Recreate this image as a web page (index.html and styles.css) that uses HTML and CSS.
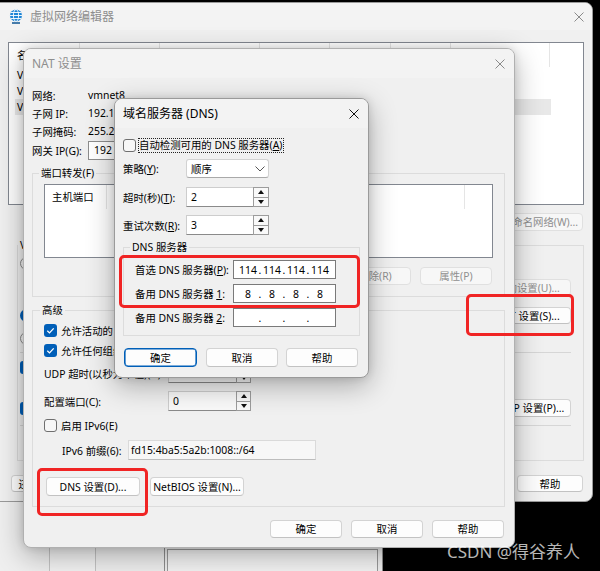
FILE: index.html
```html
<!DOCTYPE html>
<html lang="zh-CN">
<head>
<meta charset="utf-8">
<title>虚拟网络编辑器</title>
<link rel="stylesheet" href="styles.css">
</head>
<body>
<div class="desktop">

  <div class="win bgwin">
    <div class="bg-cell c1"></div>
    <div class="bg-cell c2"></div>
    <div class="bg-cell c3"></div>
    <div class="bg-panel"></div>
  </div>

  <!-- 虚拟网络编辑器 -->
  <div class="win mainwin">
    <div class="titlebar">
      <svg class="appicon" width="14" height="15" viewBox="0 0 14 15">
        <circle cx="7" cy="6.5" r="6" fill="#1f86d6"/>
        <ellipse cx="7" cy="6.5" rx="2.6" ry="6" fill="none" stroke="#fff" stroke-width="0.9"/>
        <path d="M1 6.5H13M2 3.5H12M2 9.5H12" stroke="#fff" stroke-width="0.9"/>
        <rect x="3" y="13.2" width="8" height="1.6" fill="#1d5f98"/>
      </svg>
      <span class="title dim">虚拟网络编辑器</span>
      <span class="close"><svg width="10" height="10" viewBox="0 0 10 10"><path d="M0.5 0.5L9.5 9.5M9.5 0.5L0.5 9.5" stroke="#8a8a8a" stroke-width="1"/></svg></span>
    </div>
    <div class="main-body">
      <div class="listview">
        <div class="lv-head">
          <span class="lv-col m1">名称</span>
          <span class="lv-col m2">类型</span>
          <span class="lv-col m3">外部连接</span>
          <span class="lv-col m4">主机连接</span>
          <span class="lv-col m5">DHCP</span>
          <span class="lv-col m6">子网地址</span>
          <span class="lv-col m7"></span>
        </div>
        <div class="lv-row">
          <span class="lv-cell r1">VMnet0</span><span class="lv-cell m2">桥接模式</span><span class="lv-cell m3">自动桥接</span><span class="lv-cell m4">-</span><span class="lv-cell m5">-</span><span class="lv-cell m6">-</span><span class="lv-cell m7"></span>
        </div>
        <div class="lv-row">
          <span class="lv-cell r1">VMnet1</span><span class="lv-cell m2">仅主机模式</span><span class="lv-cell m3">-</span><span class="lv-cell m4">已连接</span><span class="lv-cell m5">已启用</span><span class="lv-cell m6">192.168.47.0</span><span class="lv-cell m7"></span>
        </div>
        <div class="lv-row selected">
          <span class="lv-cell r1">VMnet8</span><span class="lv-cell m2">NAT 模式</span><span class="lv-cell m3">NAT 模式</span><span class="lv-cell m4">已连接</span><span class="lv-cell m5">已启用</span><span class="lv-cell m6">192.168.80.0</span><span class="lv-cell m7"></span>
        </div>
      </div>

      <div class="btn-row top-btns">
        <div class="btn w86">添加网络(E)...</div>
        <div class="btn w72">移除网络(O)</div>
        <div class="btn w86 disabled">重命名网络(W)...</div>
      </div>

      <fieldset class="group vmnet">
        <legend>VMnet 信息</legend>
        <div class="gbody vmnet-body">
          <div class="vrow h16"><span class="radio"></span><span class="lbl">桥接模式(将虚拟机直接连接到外部网络)(B)</span></div>
          <div class="vrow h17 mt8 indent">
            <span class="lbl">已桥接至(G):</span>
            <div class="combo wide disabled-combo"><span>自动</span></div>
            <div class="btn w86 disabled push">自动设置(U)...</div>
          </div>
          <div class="vrow h17 mt11"><span class="radio on"></span><span class="lbl">NAT 模式(与虚拟机共享主机的 IP 地址)(N)</span><div class="btn w86 push">NAT 设置(S)...</div></div>
          <div class="vrow h16 mt6"><span class="radio"></span><span class="lbl">仅主机模式(在专用网络内连接虚拟机)(H)</span></div>
          <div class="sep mt6"></div>
          <div class="vrow h16 mt6"><span class="check on"><svg width="13" height="13" viewBox="0 0 13 13"><polyline points="3.3,6.7 5.5,8.9 9.7,4.4" fill="none" stroke="#fff" stroke-width="1.3"/></svg></span><span class="lbl">将主机虚拟适配器连接到此网络(V)</span></div>
          <div class="vrow h16 mt2 indent"><span class="lbl">主机虚拟适配器名称: VMware 网络适配器 VMnet8</span></div>
          <div class="vrow h18 mt6"><span class="check on"><svg width="13" height="13" viewBox="0 0 13 13"><polyline points="3.3,6.7 5.5,8.9 9.7,4.4" fill="none" stroke="#fff" stroke-width="1.3"/></svg></span><span class="lbl">使用本地 DHCP 服务将 IP 地址分配给虚拟机(D)</span><div class="btn w86 push">DHCP 设置(P)...</div></div>
          <div class="sep mt8"></div>
          <div class="vrow h17 mt9 indent"><span class="lbl">子网 IP (I):</span><span class="lbl gap-l">子网掩码(M):</span></div>
        </div>
      </fieldset>

      <div class="btn-row bottom-btns">
        <div class="btn w90 restore">还原默认设置(R)</div>
        <div class="btn-group">
          <div class="btn w66">导入(T)...</div>
          <div class="btn w66">导出(X)...</div>
          <div class="btn w66">确定</div>
          <div class="btn w66">取消</div>
          <div class="btn w66">应用(A)</div>
          <div class="btn w66">帮助</div>
        </div>
      </div>
    </div>
  </div>

  <!-- NAT 设置 -->
  <div class="win dialog nat">
    <div class="titlebar">
      <span class="title dim">NAT 设置</span>
      <span class="close"><svg width="10" height="10" viewBox="0 0 10 10"><path d="M0.5 0.5L9.5 9.5M9.5 0.5L0.5 9.5" stroke="#8a8a8a" stroke-width="1"/></svg></span>
    </div>
    <div class="nat-body">
      <div class="info">
        <span>网络:</span><span>vmnet8</span>
        <span>子网 IP:</span><span>192.168.80.0</span>
        <span>子网掩码:</span><span>255.255.255.0</span>
        <span>网关 IP(G):</span>
        <div class="ip gw"><span class="f">192</span><span class="d">.</span><span class="f">168</span><span class="d">.</span><span class="f">80</span><span class="d">.</span><span class="f">2</span></div>
      </div>

      <fieldset class="group port">
        <legend>端口转发(F)</legend>
        <div class="gbody port-body">
          <div class="listbox">
            <div class="lb-head">
              <span class="lb-col p1">主机端口</span>
              <span class="lb-col p2">类型</span>
              <span class="lb-col p3">虚拟机 IP 地址</span>
              <span class="lb-col p4">描述</span>
            </div>
          </div>
          <div class="btn-row port-btns">
            <div class="btn w72">添加(A)...</div>
            <div class="btn w72 disabled">移除(R)</div>
            <div class="btn w72 disabled">属性(P)</div>
          </div>
        </div>
      </fieldset>

      <fieldset class="group adv">
        <legend>高级</legend>
        <div class="gbody adv-body">
          <div class="arow h20"><span class="check on"><svg width="13" height="13" viewBox="0 0 13 13"><polyline points="3.3,6.7 5.5,8.9 9.7,4.4" fill="none" stroke="#fff" stroke-width="1.3"/></svg></span><span class="lbl cbl">允许活动的 FTP(T)</span></div>
          <div class="arow h20"><span class="check on"><svg width="13" height="13" viewBox="0 0 13 13"><polyline points="3.3,6.7 5.5,8.9 9.7,4.4" fill="none" stroke="#fff" stroke-width="1.3"/></svg></span><span class="lbl cbl">允许任何组织唯一标识符(O)</span></div>
          <div class="arow h20 mt3">
            <span class="lbl lw124">UDP 超时(以秒为单位)(U):</span>
            <div class="spin nspin"><div class="field">30</div><div class="arrows"><span class="arr"><i class="up"></i></span><span class="arr"><i class="down"></i></span></div></div>
          </div>
          <div class="arow h20 mt8">
            <span class="lbl lw124">配置端口(C):</span>
            <div class="spin nspin"><div class="field">0</div><div class="arrows"><span class="arr"><i class="up"></i></span><span class="arr"><i class="down"></i></span></div></div>
          </div>
          <div class="arow h20 mt4"><span class="check"></span><span class="lbl cbl">启用 IPv6(E)</span></div>
          <div class="arow h20 mt5 indent">
            <span class="lbl lw66">IPv6 前缀(6):</span>
            <div class="prefix">fd15:4ba5:5a2b:1008::/64</div>
          </div>
          <div class="btn-row setting-btns">
            <div class="btn w94">DNS 设置(D)...</div>
            <div class="btn w94">NetBIOS 设置(N)...</div>
          </div>
        </div>
      </fieldset>

      <div class="btn-row dlg-btns">
        <div class="btn w72">确定</div>
        <div class="btn w72">取消</div>
        <div class="btn w72">帮助</div>
      </div>
    </div>
  </div>

  <!-- 域名服务器 (DNS) -->
  <div class="win dialog dns">
    <div class="titlebar">
      <span class="title">域名服务器 (DNS)</span>
      <span class="close"><svg width="10" height="10" viewBox="0 0 10 10"><path d="M0.5 0.5L9.5 9.5M9.5 0.5L0.5 9.5" stroke="#111" stroke-width="1"/></svg></span>
    </div>
    <div class="dns-body">
      <div class="drow h16 mt9"><span class="check"></span><span class="focus">自动检测可用的 DNS 服务器(<u>A</u>)</span></div>
      <div class="drow h19 mt6">
        <span class="lbl lw63">策略(<u>Y</u>):</span>
        <div class="combo"><span>顺序</span><svg width="10" height="6" viewBox="0 0 10 6"><polyline points="0.5,0.5 5,5 9.5,0.5" fill="none" stroke="#555" stroke-width="1"/></svg></div>
      </div>
      <div class="drow h20 mt9">
        <span class="lbl lw63">超时(秒)(<u>T</u>):</span>
        <div class="spin dspin"><div class="field">2</div><div class="arrows"><span class="arr"><i class="up"></i></span><span class="arr"><i class="down"></i></span></div></div>
      </div>
      <div class="drow h20 mt8">
        <span class="lbl lw63">重试次数(<u>R</u>):</span>
        <div class="spin dspin"><div class="field">3</div><div class="arrows"><span class="arr"><i class="up"></i></span><span class="arr"><i class="down"></i></span></div></div>
      </div>
      <fieldset class="group dnsgroup">
        <legend>DNS 服务器</legend>
        <div class="gbody dns-grid">
          <span class="srv">首选 DNS 服务器(<u>P</u>):</span>
          <div class="ip"><span class="f">114</span><span class="d">.</span><span class="f">114</span><span class="d">.</span><span class="f">114</span><span class="d">.</span><span class="f">114</span></div>
          <span class="srv">备用 DNS 服务器 <u>1</u>:</span>
          <div class="ip"><span class="f">8</span><span class="d">.</span><span class="f">8</span><span class="d">.</span><span class="f">8</span><span class="d">.</span><span class="f">8</span></div>
          <span class="srv">备用 DNS 服务器 <u>2</u>:</span>
          <div class="ip"><span class="f"></span><span class="d">.</span><span class="f"></span><span class="d">.</span><span class="f"></span><span class="d">.</span><span class="f"></span></div>
        </div>
      </fieldset>
      <div class="btn-row dns-btns">
        <div class="btn default w73">确定</div>
        <div class="btn w72">取消</div>
        <div class="btn w72">帮助</div>
      </div>
    </div>
  </div>

  <!-- annotations -->
  <div class="mark mark-dns"></div>
  <div class="mark mark-nat"></div>
  <div class="mark mark-btn"></div>

  <div class="watermark">CSDN @得谷养人</div>
</div>
</body>
</html>
```

FILE: styles.css
```css
* { box-sizing: border-box; }
html, body { margin: 0; padding: 0; }
body {
  background: #000;
  font-family: "Noto Sans", "Noto Sans CJK SC", sans-serif;
  font-size: 10.4px;
  color: #000;
}
u { text-decoration: underline; text-underline-offset: 1px; }

.desktop { position: relative; width: 600px; height: 571px; overflow: hidden; background: #000; }

.win { position: absolute; background: #f0f0f0; }

/* background window at the bottom */
.bgwin {
  left: 0; top: 502px; width: 383px; height: 69px;
  display: flex; background: #efefef; border-right: 1px solid #8c8c8c;
}
.bg-cell { height: 100%; border-right: 1px solid #c4c4c4; }
.bg-cell.c1 { width: 50px; }
.bg-cell.c2 { width: 46px; background: #f3f3f3; }
.bg-cell.c3 { width: 69px; border-right: 1px solid #8e8e8e; }
.bg-panel { flex: 1; margin: 47px 4px 0 2px; border-top: 1px solid #9a9a9a; border-left: 1px solid #9a9a9a; border-right: 1px solid #9a9a9a; background: #f4f4f4; }

/* title bars */
.titlebar { display: flex; align-items: center; flex: none; background: #f3f3f3; }
.title { font-size: 12px; line-height: 16px; }
.title.dim { color: #8e8e8e; }
.close { margin-left: auto; width: 10px; height: 10px; display: flex; }
.close svg { display: block; }

/* main window */
.mainwin {
  left: -1px; top: 2px; width: 594px; height: 500px;
  border: 1px solid #9a9a9a; border-radius: 0 8px 8px 0;
  display: flex; flex-direction: column; overflow: hidden;
}
.mainwin .titlebar { height: 27px; padding-left: 9px; }
.mainwin .title { margin-left: 7px; }
.mainwin .close { margin-right: 8px; }
.appicon { display: block; }

.main-body { display: flex; flex-direction: column; padding: 0 8px; }

.listview {
  margin-top: 12px; height: 163px; background: #fff;
  border: 1px solid #828790; overflow: hidden;
}
.lv-head { display: flex; height: 24px; }
.lv-col { height: 24px; line-height: 24px; padding-left: 8px; border-right: 1px solid #e5e5e5; white-space: nowrap; overflow: hidden; }
.m1 { width: 71px; }
.m2 { width: 80px; }
.m3 { width: 100px; }
.m4 { width: 70px; }
.m5 { width: 61px; }
.m6 { width: 60px; }
.m7 { width: 99px; }
.lv-row { display: flex; height: 16px; line-height: 16px; margin-left: 6px; width: 536px; }
.lv-row.selected { background: #e8e8e8; }
.lv-cell { padding-left: 8px; white-space: nowrap; overflow: hidden; flex: none; }
.lv-cell.r1 { width: 65px; padding-left: 2px; }

.btn-row { display: flex; align-items: stretch; }
.top-btns { margin-top: 8px; height: 18px; justify-content: flex-end; gap: 9px; padding-right: 1px; }

.btn {
  display: flex; align-items: center; justify-content: center;
  background: #fdfdfd; border: 1px solid #d3d3d3; border-bottom-color: #c2c2c2;
  border-radius: 4px; white-space: nowrap; color: #000; line-height: 14px;
}
.btn.disabled { color: #8f8f8f; background: #f7f7f7; border-color: #e0e0e0; }
.btn.default { border-color: #005fb8; box-shadow: inset 0 0 0 0.6px #005fb8; }
.w66 { width: 66px; }
.w72 { width: 72px; }
.w73 { width: 73px; }
.w86 { width: 86px; }
.w90 { width: 90px; }
.w94 { width: 94px; }

/* group boxes */
fieldset.group { margin: 0; padding: 0; border: 1px solid #dcdcdc; min-width: 0; }
fieldset.group legend { padding: 0 2px; line-height: 14px; height: 14px; }
.gbody { display: flex; flex-direction: column; }

fieldset.vmnet { margin: 7px 0 0 9px; }
fieldset.vmnet legend { margin-left: 0; }
.vmnet-body { padding: 3px 12px 8px 2px; }
.vrow { display: flex; align-items: center; white-space: nowrap; }
.vrow .lbl { margin-left: 4px; }
.vrow .gap-l { margin-left: 120px; }
.vrow.indent { padding-left: 14px; }
.push { margin-left: auto; height: 100%; }
.h16 { height: 16px; }
.h17 { height: 17px; }
.h18 { height: 18px; }
.h19 { height: 19px; }
.h20 { height: 20px; }
.mt2 { margin-top: 2px; }
.mt3 { margin-top: 3px; }
.mt4 { margin-top: 4px; }
.mt5 { margin-top: 5px; }
.mt6 { margin-top: 6px; }
.mt8 { margin-top: 8px; }
.mt9 { margin-top: 9px; }
.mt11 { margin-top: 11px; }
.sep { height: 1px; background: #d6d6d6; }

.radio { flex: none; width: 13px; height: 13px; border-radius: 50%; border: 1px solid #8a8a8a; background: #f5f5f5; }
.radio.on { border: 4px solid #005fb8; background: #fff; }
.check { flex: none; width: 13px; height: 13px; border-radius: 3px; border: 1px solid #6f6f6f; background: #f7f7f7; display: block; }
.check.on { border: none; background: #005fb8; }
.check svg { display: block; }

.combo {
  display: flex; align-items: center; justify-content: space-between;
  width: 83px; height: 19px; background: #fff;
  border: 1px solid #d2d2d2; border-bottom-color: #a9a9a9; border-radius: 3px;
  padding: 0 3px 0 4px;
}
.combo svg { display: block; }
.combo.wide { width: 300px; height: 100%; margin-left: 10px; }
.disabled-combo { color: #8f8f8f; background: #f7f7f7; }

.bottom-btns { margin-top: 14px; height: 17px; }
.restore { margin-left: 3px; }
.btn-group { display: flex; margin-left: auto; gap: 8px; padding-right: 1px; }

/* dialogs */
.dialog {
  border: 1px solid #b0b0b0; border-radius: 8px;
  box-shadow: 0 8px 28px rgba(0, 0, 0, 0.30), 0 0 8px rgba(0, 0, 0, 0.12);
  display: flex; flex-direction: column; overflow: hidden;
}
.dialog .titlebar { height: 29px; padding-left: 8px; }
.dialog .close { margin-right: 9px; }

/* NAT dialog */
.nat { left: 23px; top: 48px; width: 492px; height: 500px; }
.nat-body { display: flex; flex-direction: column; padding: 0 9px 0 8px; }
.info {
  margin-top: 8px; display: grid; grid-template-columns: 56px 1fr;
  grid-template-rows: 18px 18px 18px 20px; align-items: center; white-space: nowrap;
}
.ip {
  display: flex; align-items: center; width: 103px; height: 19px;
  background: #fff; border: 1px solid #7a7a7a; padding-left: 4px;
}
.ip .f { width: 20px; text-align: center; }
.ip .d { width: 4px; text-align: center; }
.ip.gw { width: 110px; border-color: #8d8d8d; }

fieldset.port { margin-top: 6px; }
fieldset.port legend { margin-left: 6px; }
.port-body { padding: 4px 11px 11px 11px; }
.listbox { height: 74px; background: #fff; border: 1px solid #828790; overflow: hidden; }
.lb-head { display: flex; height: 24px; }
.lb-col { height: 24px; line-height: 24px; padding-left: 7px; border-right: 1px solid #e5e5e5; white-space: nowrap; flex: none; }
.p1 { width: 62px; }
.p2 { width: 70px; }
.p3 { width: 110px; }
.p4 { width: 178px; }
.port-btns { margin-top: 9px; height: 18px; justify-content: flex-end; gap: 9px; padding-right: 1px; }

fieldset.adv { margin-top: 6px; }
fieldset.adv legend { margin-left: 7px; }
.adv-body { padding: 3px 11px 10px 11px; }
.arow { display: flex; align-items: center; white-space: nowrap; }
.arow .cbl { margin-left: 4px; }
.arow.indent { padding-left: 18px; }
.lw124 { width: 124px; flex: none; }
.lw66 { width: 66px; flex: none; }
.lw63 { width: 63px; flex: none; }

.spin { display: flex; height: 100%; }
.spin .field {
  background: #fff; border: 1px solid #cdcdcd; border-bottom-color: #8a8a8a;
  border-right: none; padding-left: 4px; display: flex; align-items: center;
}
.nspin .field { width: 68px; background: #f9f9f9; }
.dspin .field { width: 67px; }
.arrows { width: 16px; display: flex; flex-direction: column; border: 1px solid #9c9c9c; background: #fff; }
.nspin .arrows { width: 15px; }
.arr { flex: 1; display: flex; align-items: center; justify-content: center; background: #f9f9f9; }
.arr + .arr { border-top: 1px solid #9c9c9c; }
.arr i { display: block; width: 0; height: 0; border-left: 3.5px solid transparent; border-right: 3.5px solid transparent; }
.arr i.up { border-bottom: 4px solid #111; }
.arr i.down { border-top: 4px solid #111; }

.prefix {
  width: 188px; height: 20px; background: #f7f7f7;
  border: 1px solid #dadada; border-bottom-color: #bdbdbd;
  padding-left: 2px; display: flex; align-items: center;
}
.setting-btns { margin-top: 17px; height: 19px; gap: 10px; padding-left: 2px; }
.dlg-btns { margin-top: 13px; height: 18px; justify-content: flex-end; gap: 9px; padding-right: 1px; }

/* DNS dialog */
.dns { left: 114px; top: 98px; width: 255px; height: 280px; border-color: #9a9a9a; }
.dns-body { display: flex; flex-direction: column; padding: 0 8px; }
.drow { display: flex; align-items: center; white-space: nowrap; }
.focus { margin-left: 2px; border: 1px dotted #222; padding: 0 1px 0 0; line-height: 13px; }
fieldset.dnsgroup { margin-top: 5px; }
fieldset.dnsgroup legend { margin-left: 6px; }
.dns-grid {
  display: grid; grid-template-columns: 109px 103px;
  grid-auto-rows: 19px; row-gap: 5px; align-items: center;
  padding: 6px 0 8px 0;
}
.srv { padding-left: 11px; white-space: nowrap; }
.dns-btns { margin-top: 12px; height: 19px; padding-left: 1px; gap: 8px; }
.dns-btns .btn:first-child { margin-right: 1px; }

/* annotation boxes */
.mark { position: absolute; border: 3px solid #f02424; border-radius: 5px; }
.mark-dns { left: 119px; top: 255px; width: 241px; height: 53px; }
.mark-nat { left: 466px; top: 294px; width: 108px; height: 42px; }
.mark-btn { left: 37px; top: 468px; width: 111px; height: 48px; }

.watermark {
  position: absolute; left: 447px; top: 541px;
  font-size: 17px; line-height: 22px; color: rgba(255, 255, 255, 0.72);
  white-space: nowrap;
}
```
